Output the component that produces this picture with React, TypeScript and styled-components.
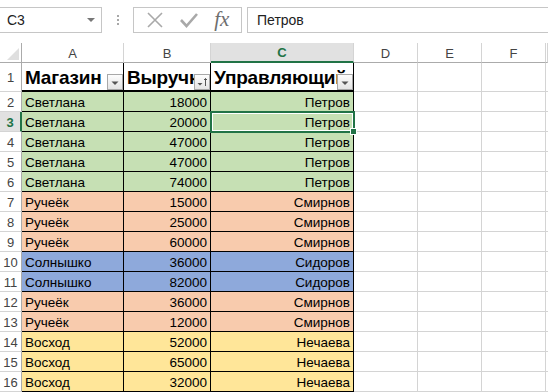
import * as React from 'react';
import styled, { createGlobalStyle } from 'styled-components';

type Fill = 'green' | 'orange' | 'blue' | 'yellow';

enum Colors {
  green = '#c6e0b4',
  orange = '#f8cbad',
  blue = '#8ea9db',
  yellow = '#ffe699',
  grid = '#d4d4d4',
  headerLine = '#ababab',
  excel = '#217346',
}

const data: [string, number, string, Fill][] = [
  ['Светлана', 18000, 'Петров', 'green'],
  ['Светлана', 20000, 'Петров', 'green'],
  ['Светлана', 47000, 'Петров', 'green'],
  ['Светлана', 47000, 'Петров', 'green'],
  ['Светлана', 74000, 'Петров', 'green'],
  ['Ручеёк', 15000, 'Смирнов', 'orange'],
  ['Ручеёк', 25000, 'Смирнов', 'orange'],
  ['Ручеёк', 60000, 'Смирнов', 'orange'],
  ['Солнышко', 36000, 'Сидоров', 'blue'],
  ['Солнышко', 82000, 'Сидоров', 'blue'],
  ['Ручеёк', 36000, 'Смирнов', 'orange'],
  ['Ручеёк', 12000, 'Смирнов', 'orange'],
  ['Восход', 52000, 'Нечаева', 'yellow'],
  ['Восход', 65000, 'Нечаева', 'yellow'],
  ['Восход', 32000, 'Нечаева', 'yellow'],
];

const GlobalStyle = createGlobalStyle`
  body {
    margin: 0;
    background: #fff;
    font-family: "Liberation Sans", Arial, sans-serif;
    overflow: hidden;
  }
`;

const Toolbar = styled.div`
  display: flex;
  align-items: flex-start;
  height: 43px;
  padding-top: 7px;
  box-sizing: border-box;
`;

const NameBox = styled.div`
  width: 102px;
  height: 26px;
  box-sizing: border-box;
  border: 1px solid #c6c6c6;
  border-left: none;
  display: flex;
  align-items: center;
  justify-content: space-between;
  padding: 0 6px 0 7px;
  font-size: 14px;
  color: #222;
`;

const DropArrow = styled.span`
  width: 0;
  height: 0;
  border-left: 4px solid transparent;
  border-right: 4px solid transparent;
  border-top: 4px solid #777;
`;

const Grip = styled.div`
  width: 31px;
  height: 26px;
  display: flex;
  flex-direction: column;
  align-items: center;
  justify-content: center;
  gap: 2px;
  & > span {
    width: 2px;
    height: 2px;
    background: #a8a8a8;
  }
`;

const FormulaButtons = styled.div`
  width: 109px;
  height: 26px;
  box-sizing: border-box;
  border: 1px solid #c6c6c6;
  display: flex;
  align-items: center;
  justify-content: space-around;
  padding: 0 4px;
`;

const Fx = styled.span`
  font-family: "Liberation Serif", serif;
  font-style: italic;
  font-size: 21px;
  color: #6e6e6e;
  line-height: 1;
  margin-top: -2px;
`;

const FormulaInput = styled.div`
  flex: 1;
  margin-left: 5px;
  height: 26px;
  box-sizing: border-box;
  border: 1px solid #c6c6c6;
  border-right: none;
  display: flex;
  align-items: center;
  padding-left: 9px;
  font-size: 14px;
  color: #222;
`;

const Row = styled.div<{ $h: number }>`
  display: grid;
  grid-template-columns: 22px 102px 87px 143px 64px 64px 64px 1fr;
  height: ${(p) => p.$h}px;
`;

const ColHead = styled.div<{ $active?: boolean }>`
  box-sizing: border-box;
  border-right: 1px solid ${Colors.grid};
  border-bottom: ${(p) => (p.$active ? `2px solid ${Colors.excel}` : `1px solid ${Colors.headerLine}`)};
  background: ${(p) => (p.$active ? '#e1e1e1' : '#fff')};
  color: ${(p) => (p.$active ? Colors.excel : '#444')};
  font-weight: ${(p) => (p.$active ? 'bold' : 'normal')};
  font-size: 13px;
  display: flex;
  align-items: center;
  justify-content: center;
  padding-top: 1px;
`;

const Corner = styled.div`
  position: relative;
  box-sizing: border-box;
  border-right: 1px solid ${Colors.headerLine};
  border-bottom: 1px solid ${Colors.headerLine};
  &::after {
    content: '';
    position: absolute;
    right: 2px;
    bottom: 2px;
    border-left: 12px solid transparent;
    border-bottom: 12px solid #dfdfdf;
  }
`;

const RowHead = styled.div<{ $active?: boolean }>`
  box-sizing: border-box;
  border-right: ${(p) => (p.$active ? `2px solid ${Colors.excel}` : `1px solid ${Colors.headerLine}`)};
  border-bottom: 1px solid ${Colors.grid};
  background: ${(p) => (p.$active ? '#e1e1e1' : '#fff')};
  color: ${(p) => (p.$active ? Colors.excel : '#444')};
  font-weight: ${(p) => (p.$active ? 'bold' : 'normal')};
  font-size: 13px;
  display: flex;
  align-items: center;
  justify-content: center;
  padding-top: 1px;
`;

const Cell = styled.div<{ $fill?: Fill; $right?: boolean; $table?: boolean; $thick?: boolean }>`
  position: relative;
  box-sizing: border-box;
  background: ${(p) => (p.$fill ? Colors[p.$fill] : '#fff')};
  border-right: 1px solid ${(p) => (p.$table ? '#000' : Colors.grid)};
  border-bottom: ${(p) => (p.$thick ? 2 : 1)}px solid ${(p) => (p.$table ? '#000' : Colors.grid)};
  display: flex;
  align-items: center;
  justify-content: ${(p) => (p.$right ? 'flex-end' : 'flex-start')};
  padding: 1px 3px 0 3px;
  font-size: 13.5px;
  color: #000;
  white-space: nowrap;
  overflow: hidden;
`;

const HeadCell = styled(Cell)`
  align-items: flex-end;
  font-size: 19px;
  font-weight: bold;
  letter-spacing: -0.2px;
  padding: 0 0 1px 3px;
  overflow: visible;
  clip-path: inset(0 0 0 0);
`;

const FilterButton = styled.div`
  position: absolute;
  right: 0;
  bottom: 0;
  width: 16px;
  height: 16px;
  box-sizing: border-box;
  border: 1px solid #a8a8a8;
  background: linear-gradient(#fdfdfd, #e4e4e4);
  display: flex;
  align-items: center;
  justify-content: center;
`;

const Selection = styled.div`
  position: absolute;
  left: -1px;
  top: -1px;
  right: -2px;
  bottom: -2px;
  border: 2px solid ${Colors.excel};
  box-shadow: inset 0 0 0 1px #fff;
  pointer-events: none;
  &::after {
    content: '';
    position: absolute;
    right: -4px;
    bottom: -4px;
    width: 5px;
    height: 5px;
    background: ${Colors.excel};
    border: 1px solid #fff;
  }
`;

const SelectedCell = styled(Cell)`
  overflow: visible;
  z-index: 1;
`;

function FilterIcon({ sorted }: { sorted?: boolean }) {
  return (
    <FilterButton>
      <svg width="14" height="14" viewBox="0 0 14 14">
        <path d={sorted ? 'M2.5 8 L7.5 8 L5 10.5 Z' : 'M3.5 6.5 L10.5 6.5 L7 10 Z'} fill="#555" />
        {sorted && <path d="M10.5 3.5 V11 M9 5 L10.5 3.5 L12 5" stroke="#555" strokeWidth="1" fill="none" />}
      </svg>
    </FilterButton>
  );
}

export default function App() {
  const cols = ['A', 'B', 'C', 'D', 'E', 'F', ''];
  return (
    <>
      <GlobalStyle />
      <Toolbar>
        <NameBox>
          C3
          <DropArrow />
        </NameBox>
        <Grip>
          <span />
          <span />
          <span />
        </Grip>
        <FormulaButtons>
          <svg width="18" height="18" viewBox="0 0 18 18">
            <path d="M2 2 L16 16 M16 2 L2 16" stroke="#a9a9a9" strokeWidth="1.6" />
          </svg>
          <svg width="20" height="18" viewBox="0 0 20 18">
            <path d="M2 9 L7.5 15 L18 3" stroke="#a9a9a9" strokeWidth="2.6" fill="none" />
          </svg>
          <Fx>fx</Fx>
        </FormulaButtons>
        <FormulaInput>Петров</FormulaInput>
      </Toolbar>

      <Row $h={20}>
        <Corner />
        {cols.map((c) => (
          <ColHead key={c || 'g'} $active={c === 'C'}>
            {c}
          </ColHead>
        ))}
      </Row>

      <Row $h={29}>
        <RowHead>1</RowHead>
        <HeadCell $table $thick>
          Магазин
          <FilterIcon />
        </HeadCell>
        <HeadCell $table $thick>
          Выручка
          <FilterIcon sorted />
        </HeadCell>
        <HeadCell $table $thick>
          Управляющий
          <FilterIcon />
        </HeadCell>
        <Cell />
        <Cell />
        <Cell />
        <Cell />
      </Row>

      {data.map(([shop, sum, boss, fill], i) => {
        const n = i + 2;
        const active = n === 3;
        return (
          <Row key={n} $h={20}>
            <RowHead $active={active}>{n}</RowHead>
            <Cell $table $fill={fill}>
              {shop}
            </Cell>
            <Cell $table $fill={fill} $right>
              {sum}
            </Cell>
            {active ? (
              <SelectedCell $table $fill={fill} $right>
                {boss}
                <Selection />
              </SelectedCell>
            ) : (
              <Cell $table $fill={fill} $right>
                {boss}
              </Cell>
            )}
            <Cell />
            <Cell />
            <Cell />
            <Cell />
          </Row>
        );
      })}
    </>
  );
}
